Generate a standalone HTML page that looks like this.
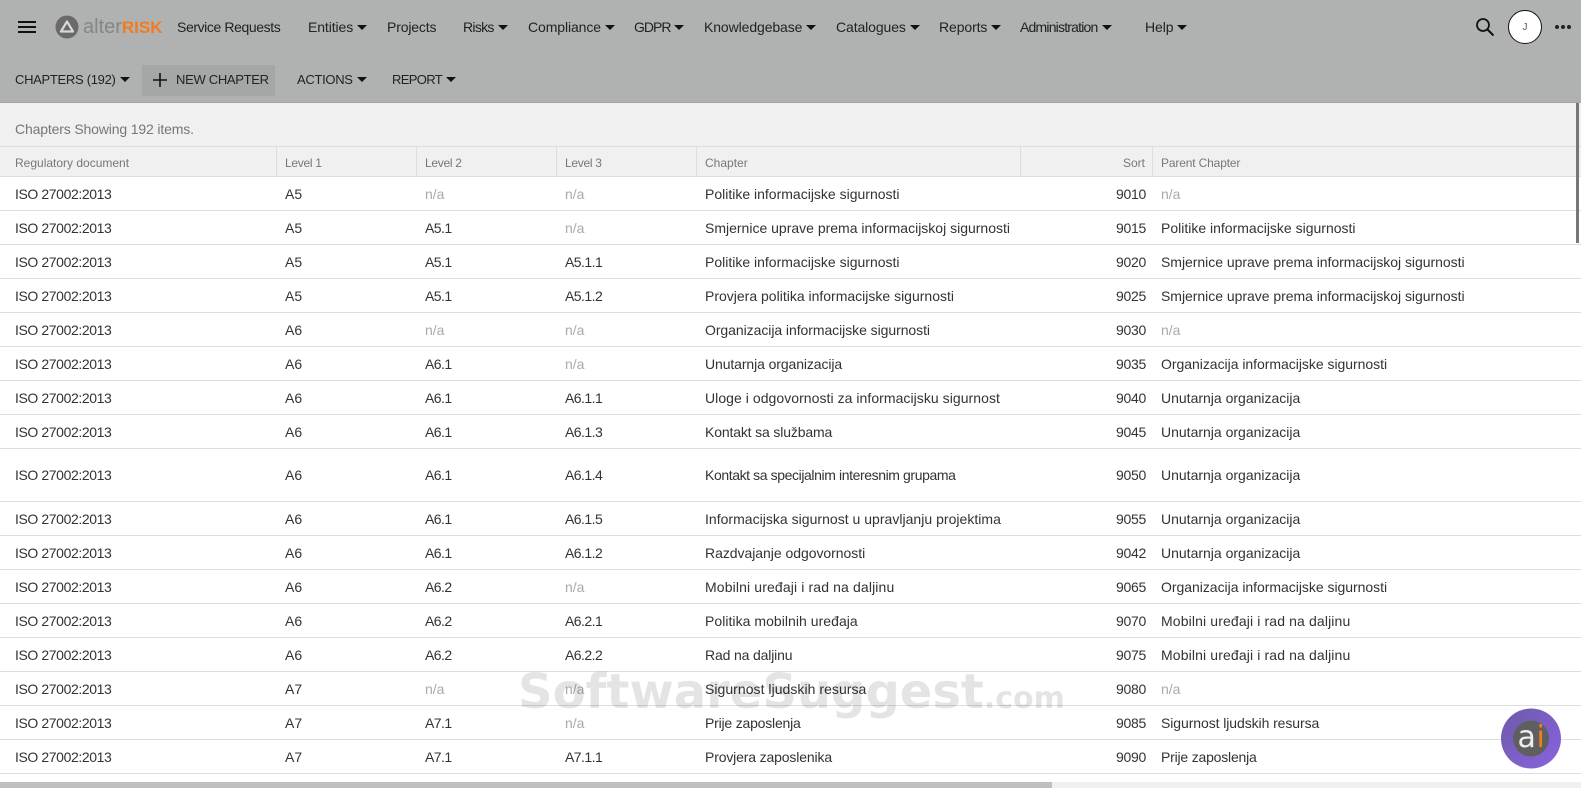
<!DOCTYPE html>
<html><head><meta charset="utf-8"><style>
html,body{margin:0;padding:0;width:1581px;height:788px;overflow:hidden;background:#fff}
body{font-family:"Liberation Sans",sans-serif;font-size:14px;color:#333;position:relative}
.a{position:absolute;white-space:nowrap}
#top{position:absolute;left:0;top:0;width:1581px;height:102px;background:#b0b2b1;border-bottom:1px solid #a4a5a5}
.n{position:absolute;top:17px;line-height:20px;color:#222;white-space:nowrap;letter-spacing:-.1px}
.s{position:absolute;top:69px;line-height:22px;color:#222;white-space:nowrap;font-size:13px;letter-spacing:-.3px}
.car:after{content:"";display:inline-block;border:5px solid transparent;border-top:5px solid #111;border-bottom:0;margin-left:4px;vertical-align:2px}
#sum{position:absolute;left:0;top:103px;width:1581px;height:43px;background:#f0f0f0;border-bottom:1px solid #ddd}
#sum span{position:absolute;left:15px;top:16px;color:#777;line-height:20px;letter-spacing:-.15px}
#hd{position:absolute;left:0;top:147px;width:1581px;height:29px;background:#f0f0f0;border-bottom:1px solid #ddd}
#hd span{position:absolute;top:2px;line-height:29px;font-size:12px;color:#777;white-space:nowrap}
#hd i{position:absolute;top:0;width:1px;height:29px;background:#ddd}
.r{position:absolute;left:0;width:1581px;border-bottom:1px solid #ddd;height:33px;line-height:35px}
.r.t{height:52px;line-height:52px}
.r span{position:absolute;top:0;white-space:nowrap;letter-spacing:0}
.r .c1{left:15px;letter-spacing:-.4px}.c2{left:285px}.r .c3{left:425px;letter-spacing:-.55px}.r .c4{left:565px;letter-spacing:-.55px}.c5{left:705px}
.r .c3.g,.r .c4.g{letter-spacing:0}
.r .c6{left:1088px;width:58px;text-align:right;letter-spacing:-.3px}.c7{left:1161px}
.g{color:#aaa}
#wm{position:absolute;left:518px;top:662px;font-family:"DejaVu Sans",sans-serif;font-weight:bold;font-size:48px;line-height:60px;color:rgba(0,0,0,.105);white-space:nowrap}
#wm b{font-size:30px}
</style></head><body>
<div id="top"></div>
<div class="a" style="left:18px;top:21px;width:18px;height:2.4px;background:#111"></div>
<div class="a" style="left:18px;top:26px;width:18px;height:2.4px;background:#111"></div>
<div class="a" style="left:18px;top:31px;width:18px;height:2.4px;background:#111"></div>
<svg class="a" style="left:55px;top:15px" width="24" height="24" viewBox="0 0 24 24"><circle cx="12" cy="12" r="11.5" fill="#6a6a6a"/><path d="M12 6.5 L18 16.5 H6 Z" fill="none" stroke="#d8d8d8" stroke-width="2.2" stroke-linejoin="round"/></svg>
<div class="a" style="left:83px;top:13px;font-size:20px;line-height:28px;color:#858686">alter<b style="color:#f47a20;font-size:17px">RISK</b></div>

<div class="n" style="left:177px;letter-spacing:-.4px">Service Requests</div>
<div class="n car" style="left:308px">Entities</div>
<div class="n" style="left:387px;letter-spacing:-.15px">Projects</div>
<div class="n car" style="left:463px;letter-spacing:-.7px">Risks</div>
<div class="n car" style="left:528px">Compliance</div>
<div class="n car" style="left:634px;letter-spacing:-1px">GDPR</div>
<div class="n car" style="left:704px">Knowledgebase</div>
<div class="n car" style="left:836px">Catalogues</div>
<div class="n car" style="left:939px">Reports</div>
<div class="n car" style="left:1020px;letter-spacing:-.8px">Administration</div>
<div class="n car" style="left:1145px">Help</div>

<svg class="a" style="left:1474px;top:16px" width="22" height="22" viewBox="0 0 22 22"><circle cx="9" cy="9" r="6" fill="none" stroke="#111" stroke-width="1.8"/><path d="M13.5 13.5 L19.5 19.5" stroke="#111" stroke-width="2"/></svg>
<div class="a" style="left:1508px;top:10px;width:32px;height:32px;border:1px solid #111;border-radius:50%;background:#fff;text-align:center;line-height:33px;font-size:10px;color:#555">J</div>
<div class="a" style="left:1555px;top:25px;width:4px;height:4px;border-radius:50%;background:#222"></div>
<div class="a" style="left:1561px;top:25px;width:4px;height:4px;border-radius:50%;background:#222"></div>
<div class="a" style="left:1567px;top:25px;width:4px;height:4px;border-radius:50%;background:#222"></div>

<div class="s car" style="left:15px">CHAPTERS (192)</div>
<div class="a" style="left:142px;top:65px;width:133px;height:31px;background:#a5a6a6"></div>
<svg class="a" style="left:152px;top:72px" width="16" height="16" viewBox="0 0 16 16"><path d="M8 1V15M1 8H15" stroke="#111" stroke-width="1.6"/></svg>
<div class="s" style="left:176px">NEW CHAPTER</div>
<div class="s car" style="left:297px">ACTIONS</div>
<div class="s car" style="left:392px;letter-spacing:-.65px">REPORT</div>

<div id="sum"><span>Chapters Showing 192 items.</span></div>
<div id="hd">
<span style="left:15px">Regulatory document</span>
<i style="left:276px"></i><span style="left:285px;letter-spacing:-.3px">Level 1</span>
<i style="left:416px"></i><span style="left:425px;letter-spacing:-.3px">Level 2</span>
<i style="left:556px"></i><span style="left:565px;letter-spacing:-.3px">Level 3</span>
<i style="left:696px"></i><span style="left:705px">Chapter</span>
<i style="left:1020px"></i><span style="left:1087px;width:58px;text-align:right">Sort</span>
<i style="left:1152px"></i><span style="left:1161px;letter-spacing:-.15px">Parent Chapter</span>
</div>

<div class="r" style="top:177px"><span class="c1">ISO 27002:2013</span><span class="c2">A5</span><span class="c3 g">n/a</span><span class="c4 g">n/a</span><span class="c5">Politike informacijske sigurnosti</span><span class="c6">9010</span><span class="c7 g">n/a</span></div>
<div class="r" style="top:211px"><span class="c1">ISO 27002:2013</span><span class="c2">A5</span><span class="c3">A5.1</span><span class="c4 g">n/a</span><span class="c5">Smjernice uprave prema informacijskoj sigurnosti</span><span class="c6">9015</span><span class="c7">Politike informacijske sigurnosti</span></div>
<div class="r" style="top:245px"><span class="c1">ISO 27002:2013</span><span class="c2">A5</span><span class="c3">A5.1</span><span class="c4">A5.1.1</span><span class="c5">Politike informacijske sigurnosti</span><span class="c6">9020</span><span class="c7" style="letter-spacing:-.03px">Smjernice uprave prema informacijskoj sigurnosti</span></div>
<div class="r" style="top:279px"><span class="c1">ISO 27002:2013</span><span class="c2">A5</span><span class="c3">A5.1</span><span class="c4">A5.1.2</span><span class="c5">Provjera politika informacijske sigurnosti</span><span class="c6">9025</span><span class="c7" style="letter-spacing:-.03px">Smjernice uprave prema informacijskoj sigurnosti</span></div>
<div class="r" style="top:313px"><span class="c1">ISO 27002:2013</span><span class="c2">A6</span><span class="c3 g">n/a</span><span class="c4 g">n/a</span><span class="c5" style="letter-spacing:-.06px">Organizacija informacijske sigurnosti</span><span class="c6">9030</span><span class="c7 g">n/a</span></div>
<div class="r" style="top:347px"><span class="c1">ISO 27002:2013</span><span class="c2">A6</span><span class="c3">A6.1</span><span class="c4 g">n/a</span><span class="c5" style="letter-spacing:-.1px">Unutarnja organizacija</span><span class="c6">9035</span><span class="c7" style="letter-spacing:-.03px">Organizacija informacijske sigurnosti</span></div>
<div class="r" style="top:381px"><span class="c1">ISO 27002:2013</span><span class="c2">A6</span><span class="c3">A6.1</span><span class="c4">A6.1.1</span><span class="c5" style="letter-spacing:.05px">Uloge i odgovornosti za informacijsku sigurnost</span><span class="c6">9040</span><span class="c7">Unutarnja organizacija</span></div>
<div class="r" style="top:415px"><span class="c1">ISO 27002:2013</span><span class="c2">A6</span><span class="c3">A6.1</span><span class="c4">A6.1.3</span><span class="c5" style="letter-spacing:-.15px">Kontakt sa službama</span><span class="c6">9045</span><span class="c7">Unutarnja organizacija</span></div>
<div class="r t" style="top:449px"><span class="c1">ISO 27002:2013</span><span class="c2">A6</span><span class="c3">A6.1</span><span class="c4">A6.1.4</span><span class="c5" style="letter-spacing:-.4px">Kontakt sa specijalnim interesnim grupama</span><span class="c6">9050</span><span class="c7">Unutarnja organizacija</span></div>
<div class="r" style="top:502px"><span class="c1">ISO 27002:2013</span><span class="c2">A6</span><span class="c3">A6.1</span><span class="c4">A6.1.5</span><span class="c5" style="letter-spacing:.02px">Informacijska sigurnost u upravljanju projektima</span><span class="c6">9055</span><span class="c7">Unutarnja organizacija</span></div>
<div class="r" style="top:536px"><span class="c1">ISO 27002:2013</span><span class="c2">A6</span><span class="c3">A6.1</span><span class="c4">A6.1.2</span><span class="c5" style="letter-spacing:-.04px">Razdvajanje odgovornosti</span><span class="c6">9042</span><span class="c7">Unutarnja organizacija</span></div>
<div class="r" style="top:570px"><span class="c1">ISO 27002:2013</span><span class="c2">A6</span><span class="c3">A6.2</span><span class="c4 g">n/a</span><span class="c5" style="letter-spacing:.13px">Mobilni uređaji i rad na daljinu</span><span class="c6">9065</span><span class="c7" style="letter-spacing:-.03px">Organizacija informacijske sigurnosti</span></div>
<div class="r" style="top:604px"><span class="c1">ISO 27002:2013</span><span class="c2">A6</span><span class="c3">A6.2</span><span class="c4">A6.2.1</span><span class="c5" style="letter-spacing:.04px">Politika mobilnih uređaja</span><span class="c6">9070</span><span class="c7" style="letter-spacing:.13px">Mobilni uređaji i rad na daljinu</span></div>
<div class="r" style="top:638px"><span class="c1">ISO 27002:2013</span><span class="c2">A6</span><span class="c3">A6.2</span><span class="c4">A6.2.2</span><span class="c5" style="letter-spacing:-.15px">Rad na daljinu</span><span class="c6">9075</span><span class="c7" style="letter-spacing:.13px">Mobilni uređaji i rad na daljinu</span></div>
<div class="r" style="top:672px"><span class="c1">ISO 27002:2013</span><span class="c2">A7</span><span class="c3 g">n/a</span><span class="c4 g">n/a</span><span class="c5" style="letter-spacing:.04px">Sigurnost ljudskih resursa</span><span class="c6">9080</span><span class="c7 g">n/a</span></div>
<div class="r" style="top:706px"><span class="c1">ISO 27002:2013</span><span class="c2">A7</span><span class="c3">A7.1</span><span class="c4 g">n/a</span><span class="c5" style="letter-spacing:-.2px">Prije zaposlenja</span><span class="c6">9085</span><span class="c7" style="letter-spacing:-.08px">Sigurnost ljudskih resursa</span></div>
<div class="r" style="top:740px"><span class="c1">ISO 27002:2013</span><span class="c2">A7</span><span class="c3">A7.1</span><span class="c4">A7.1.1</span><span class="c5" style="letter-spacing:-.15px">Provjera zaposlenika</span><span class="c6">9090</span><span class="c7" style="letter-spacing:-.2px">Prije zaposlenja</span></div>

<div id="wm">SoftwareSuggest<b>.com</b></div>

<div class="a" style="left:1576px;top:103px;width:3px;height:140px;background:#777"></div>
<div class="a" style="left:0;top:782px;width:1581px;height:6px;background:#f0f0f0"></div>
<div class="a" style="left:0;top:782px;width:1052px;height:6px;background:#c0c0c0"></div>

<svg class="a" style="left:1497px;top:704px" width="70" height="70" viewBox="0 0 70 70"><defs><linearGradient id="gr" x1="0" y1="0" x2="1" y2="1"><stop offset="0" stop-color="#6d5aa8"/><stop offset="1" stop-color="#8a63e0"/></linearGradient></defs><circle cx="34" cy="34.5" r="30" fill="url(#gr)"/><circle cx="34" cy="34.5" r="18" fill="#5f5f5f"/><text x="20.5" y="43" font-family="DejaVu Sans" font-size="30" fill="#eee">a</text><text x="39.5" y="43" font-family="DejaVu Sans" font-size="30" fill="#f47a20">i</text></svg>
</body></html>
